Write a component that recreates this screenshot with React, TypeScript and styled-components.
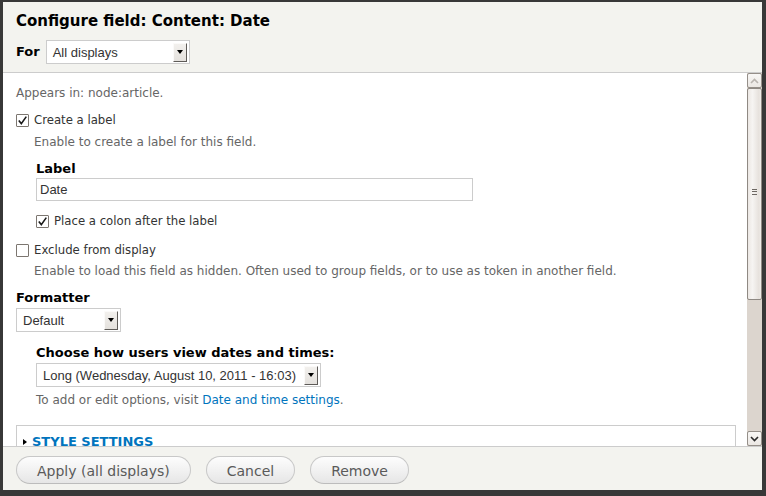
import React from 'react'
import styled, { createGlobalStyle } from 'styled-components'

const GlobalStyle = createGlobalStyle`
	*, *::before, *::after {
		box-sizing: border-box;
	}
	html, body {
		margin: 0;
		padding: 0;
		background: #383838;
	}
	body {
		font-family: 'DejaVu Sans', Verdana, sans-serif;
		color: #333;
		overflow: hidden;
	}
`

const Dialog = styled.div`
	margin: 2px 4px 0 3px;
	height: 488px;
	display: flex;
	flex-direction: column;
	background: #f3f3ef;
`

const Header = styled.div`
	height: 71px;
	flex: none;
	padding: 9px 13px 0;
	border-bottom: 1px solid #cccccc;
`

const Title = styled.h1`
	margin: 0;
	font-size: 15px;
	line-height: 21px;
	font-weight: bold;
	color: #000;
`

const ForRow = styled.div`
	margin-top: 8px;
	display: flex;
	align-items: center;
	gap: 6px;
`

const BoldLabel = styled.label`
	display: block;
	font-size: 13px;
	line-height: 18px;
	font-weight: bold;
	color: #000;
`

const Body = styled.div`
	flex: 1;
	min-height: 0;
	display: flex;
	background: #fff;
`

const Content = styled.div`
	flex: 1;
	min-width: 0;
	overflow: hidden;
	padding: 11px 11px 0 13px;
`

const Note = styled.div<{ $mt?: number; $indent?: boolean }>`
	margin-top: ${p => p.$mt ?? 0}px;
	padding-left: ${p => (p.$indent ? 18 : 0)}px;
	font-size: 12px;
	line-height: 18px;
	color: #666;
`

const Link = styled.a`
	color: #0074bd;
	text-decoration: none;
`

const Item = styled.div<{ $mt?: number; $indent?: boolean }>`
	margin-top: ${p => p.$mt ?? 0}px;
	padding-left: ${p => (p.$indent ? 20 : 0)}px;
`

const CheckRow = styled.div<{ $mt?: number }>`
	margin-top: ${p => p.$mt ?? 0}px;
	display: flex;
	align-items: center;
	gap: 5px;
	font-family: 'DejaVu Sans Condensed', 'DejaVu Sans', sans-serif;
	font-size: 13px;
	line-height: 18px;
	color: #333;
`

const Box = styled.span`
	width: 13px;
	height: 13px;
	flex: none;
	display: inline-flex;
	align-items: center;
	justify-content: center;
	border: 1px solid #7c7670;
	border-radius: 1px;
	background: #fff;
`

const TextInput = styled.div<{ $width: number }>`
	width: ${p => p.$width}px;
	height: 23px;
	display: flex;
	align-items: center;
	padding: 0 3px;
	border: 1px solid #ccc;
	background: #fff;
	font-family: 'Liberation Sans', Arial, sans-serif;
	font-size: 13px;
	color: #333;
`

const Select = styled.div<{ $width: number; $mt?: number }>`
	margin-top: ${p => p.$mt ?? 0}px;
	width: ${p => p.$width}px;
	height: 24px;
	display: flex;
	align-items: center;
	justify-content: space-between;
	padding: 0 2px 0 6px;
	border: 1px solid #ccc;
	background: #fff;
	font-family: 'Liberation Sans', Arial, sans-serif;
	font-size: 13px;
	color: #333;
	white-space: nowrap;
`

const SelectButton = styled.span`
	width: 14px;
	height: 19px;
	display: flex;
	align-items: center;
	justify-content: center;
	background: linear-gradient(#f2f0ed, #e4e1dd);
	border-top: 1px solid #fbfaf9;
	border-left: 1px solid #fbfaf9;
	border-right: 1px solid #5e5b58;
	border-bottom: 1px solid #5e5b58;

	&::after {
		content: '';
		border-left: 3.5px solid transparent;
		border-right: 3.5px solid transparent;
		border-top: 4px solid #000;
	}
`

const Fieldset = styled.div`
	margin-top: 16px;
	height: 60px;
	border: 1px solid #ccc;
	padding: 7px 6px 0;
`

const Legend = styled.div`
	display: flex;
	align-items: center;
	gap: 5px;
	font-size: 13px;
	line-height: 18px;
	font-weight: bold;
	color: #0074bd;
	text-transform: uppercase;

	&::before {
		content: '';
		border-top: 3.5px solid transparent;
		border-bottom: 3.5px solid transparent;
		border-left: 4px solid #000;
	}
`

const Scrollbar = styled.div`
	width: 15px;
	flex: none;
	display: flex;
	flex-direction: column;
	background: #dcd5ce;
`

const ScrollButton = styled.div`
	height: 15px;
	flex: none;
	display: flex;
	align-items: center;
	justify-content: center;
	border: 1px solid #958f89;
	border-radius: 2px;
	background: linear-gradient(#f8f7f5, #ebe7e3);
`

const Thumb = styled.div`
	height: 212px;
	flex: none;
	display: flex;
	align-items: center;
	justify-content: center;
	border: 1px solid #8f8983;
	border-radius: 2px;
	background: linear-gradient(to right, #ece8e4, #f6f4f2 35%, #e6e1dc 85%, #f2efec);
`

const Grip = styled.span`
	width: 5px;
	height: 6px;
	margin-top: -4px;
	background: repeating-linear-gradient(#6d6863 0 1px, transparent 1px 2.5px);
`

const Track = styled.div`
	flex: 1;
`

const Footer = styled.div`
	height: 44px;
	flex: none;
	display: flex;
	gap: 15px;
	padding: 9px 13px 0;
	border-top: 1px solid #ccc;
`

const Button = styled.button`
	height: 28px;
	padding: 1px 20px 0;
	border: 1px solid #c8c8c8;
	border-bottom-color: #bcbcbc;
	border-radius: 20px;
	background: linear-gradient(#fdfdfd, #e6e6e6);
	font-family: 'DejaVu Sans', Verdana, sans-serif;
	font-size: 14px;
	color: #5a5a5a;
`

const Check = () => (
	<svg width="11" height="11" viewBox="0 0 11 11">
		<path d="M1.8 5.6 L4.3 8.6 L9.3 1.6" fill="none" stroke="#1a1a1a" strokeWidth="1.6" />
	</svg>
)

const Chevron = ({ up, color }: { up?: boolean; color: string }) => (
	<svg width="9" height="6" viewBox="0 0 9 6">
		<path d={up ? 'M1 5 L4.5 1.5 L8 5' : 'M1 1 L4.5 4.5 L8 1'} fill="none" stroke={color} strokeWidth="1.6" />
	</svg>
)

const App = () => (
	<>
		<GlobalStyle />
		<Dialog>
			<Header>
				<Title>Configure field: Content: Date</Title>
				<ForRow>
					<BoldLabel>For</BoldLabel>
					<Select $width={144}>
						All displays
						<SelectButton />
					</Select>
				</ForRow>
			</Header>
			<Body>
				<Content>
					<Note>Appears in: node:article.</Note>
					<CheckRow $mt={9}>
						<Box>
							<Check />
						</Box>
						Create a label
					</CheckRow>
					<Note $mt={4} $indent>
						Enable to create a label for this field.
					</Note>
					<Item $mt={9} $indent>
						<BoldLabel>Label</BoldLabel>
						<TextInput $width={437}>Date</TextInput>
						<CheckRow $mt={11}>
							<Box>
								<Check />
							</Box>
							Place a colon after the label
						</CheckRow>
					</Item>
					<CheckRow $mt={11}>
						<Box />
						Exclude from display
					</CheckRow>
					<Note $mt={3} $indent>
						Enable to load this field as hidden. Often used to group fields, or to use as token in another
						field.
					</Note>
					<Item $mt={9}>
						<BoldLabel>Formatter</BoldLabel>
						<Select $width={105} $mt={1}>
							Default
							<SelectButton />
						</Select>
					</Item>
					<Item $mt={12} $indent>
						<BoldLabel>Choose how users view dates and times:</BoldLabel>
						<Select $width={285} $mt={1}>
							Long (Wednesday, August 10, 2011 - 16:03)
							<SelectButton />
						</Select>
						<Note $mt={4}>
							To add or edit options, visit <Link href="#">Date and time settings</Link>.
						</Note>
					</Item>
					<Fieldset>
						<Legend>Style settings</Legend>
					</Fieldset>
				</Content>
				<Scrollbar>
					<ScrollButton>
						<Chevron up color="#b9b4af" />
					</ScrollButton>
					<Thumb>
						<Grip />
					</Thumb>
					<Track />
					<ScrollButton>
						<Chevron color="#2a2a2a" />
					</ScrollButton>
				</Scrollbar>
			</Body>
			<Footer>
				<Button>Apply (all displays)</Button>
				<Button>Cancel</Button>
				<Button>Remove</Button>
			</Footer>
		</Dialog>
	</>
)

export default App
